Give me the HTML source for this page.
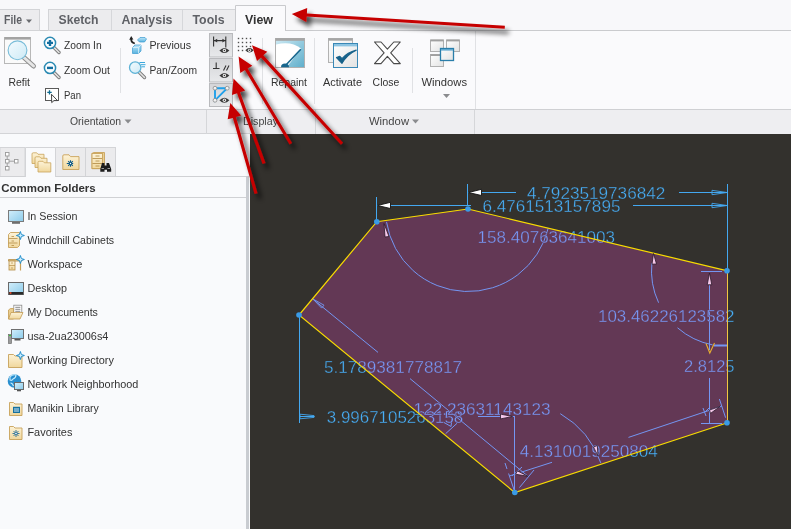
<!DOCTYPE html>
<html><head><meta charset="utf-8">
<style>
html,body{margin:0;padding:0;}
body{width:791px;height:529px;position:relative;overflow:hidden;background:#f8f8fa;font-family:"Liberation Sans",sans-serif;}
.abs{position:absolute;}
svg{position:absolute;left:0;top:0;will-change:transform;}
</style></head>
<body>
<!-- top strip -->
<div class="abs" style="left:0;top:0;width:791px;height:30px;background:#f8f8fa"></div>
<!-- ribbon -->
<div class="abs" style="left:0;top:30px;width:791px;height:79px;background:#fafafc;border-top:1px solid #cacbce;box-sizing:border-box"></div>
<!-- group label bar -->
<div class="abs" style="left:0;top:109px;width:791px;height:25px;background:#eeeef1;border-top:1px solid #cfd0d3;box-sizing:border-box"></div>
<!-- left panel -->
<div class="abs" style="left:0;top:134px;width:250px;height:395px;background:#f9fafc"></div>
<div class="abs" style="left:246px;top:176px;width:3px;height:353px;background:#c9ccd1"></div>
<!-- graphics -->
<div class="abs" style="left:250px;top:134px;width:541px;height:395px;background:#33312d"></div>

<svg width="791" height="529" viewBox="0 0 791 529" font-family="Liberation Sans, sans-serif">



<!-- graphics area -->
<defs>
<clipPath id="cpIn"><polygon points="376.8,221.7 468.0,209.0 727.5,270.8 727.5,422.7 514.8,492.5 299.0,315.0"/></clipPath>
<clipPath id="cpArea"><rect x="250" y="134" width="541" height="395"/></clipPath>

<g id="dimlines" fill="none" stroke="currentColor" stroke-width="1">
<!-- top horizontal dims -->
<path d="M376.5 197v24M467.5 184v21M727.5 184v87"/>
<path d="M377 205.5h94M633 205.5h94.5"/>
<path d="M468 192.5h48M679 192.5h48"/>
<path d="M712 190.3l15 2.2-15 2.2zM712 203.3l15 2.2-15 2.2z" stroke-width="0.9"/>
<!-- 158 arc at B -->
<path d="M386.5 221.9A82.5 82.5 0 0 0 548.2 228.3"/>
<!-- 103 arc at C -->
<path d="M651.9 262.9A75.5 75.5 0 0 0 658.6 302.7"/>
<path d="M677.5 327.8A75.5 75.5 0 0 0 712.6 344.9"/>
<!-- 2.8125 vertical -->
<path d="M701 271.5h21M709.5 285v65M709.5 378v45M701 423.5h21"/>
<path d="M714 345.5h13" stroke-width="2"/>
<!-- F witness + 3.99 -->
<path d="M299.5 315v108M299.5 416.5h15M478 416.5h36M514.5 416v76"/>
<path d="M300 414.2l14 1.4v1.8l-14 1.4z" stroke-width="0.9"/>
<!-- 5.17 aligned -->
<path d="M312.5 298.8L378 352.4M410 378.6L528 476.3M519.5 487.5L534 470"/>
<path d="M313 299l11 6.2-2.4 2.9z" stroke-width="0.9"/>
<!-- 122 arc at E -->
<path d="M560.3 413.7A91 91 0 0 1 600.8 462.9"/>
<path d="M445.6 433.7L457 423.3M451 426.5l-7 -4M451 426.5l1 -8"/>
<!-- 4.131 aligned -->
<path d="M509.3 476L552 462.3M628.5 437.4L721.8 406.2M508.6 473.5L514.8 492M719.4 399L725.6 417.7"/>
<path d="M507 469l-2 -6M512 476l10 -9"/>
<path d="M705 412l4 -4M706 416l-3 -8"/>
</g>
<g id="dimtext" font-size="16.2" stroke-width="0.3">
<text x="527" y="198.7" textLength="138.3" lengthAdjust="spacingAndGlyphs">4.7923519736842</text>
<text x="482.6" y="212.3" textLength="137.8" lengthAdjust="spacingAndGlyphs">6.4761513157895</text>
<text x="477.5" y="242.7" textLength="137.5" lengthAdjust="spacingAndGlyphs">158.40763641003</text>
<text x="598" y="321.9" textLength="136.5" lengthAdjust="spacingAndGlyphs">103.46226123582</text>
<text x="684" y="372.2" textLength="50.5" lengthAdjust="spacingAndGlyphs">2.8125</text>
<text x="324" y="372.8" textLength="138" lengthAdjust="spacingAndGlyphs">5.1789381778817</text>
<text x="326.8" y="423.3" textLength="136.5" lengthAdjust="spacingAndGlyphs">3.9967105263158</text>
<text x="413.6" y="414.8" textLength="137" lengthAdjust="spacingAndGlyphs">122.23631143123</text>
<text x="519.8" y="456.9" textLength="138" lengthAdjust="spacingAndGlyphs">4.1310019250804</text>
</g>

<filter id="shd" x="-30%" y="-30%" width="160%" height="160%"><feGaussianBlur in="SourceAlpha" stdDeviation="2.8"/><feOffset dx="3.5" dy="4.5" result="b"/><feComponentTransfer><feFuncA type="linear" slope="0.75"/></feComponentTransfer><feMerge><feMergeNode/><feMergeNode in="SourceGraphic"/></feMerge></filter>
</defs>
<g clip-path="url(#cpArea)">
<polygon points="376.8,221.7 468.0,209.0 727.5,270.8 727.5,422.7 514.8,492.5 299.0,315.0" fill="#633855"/>
<use href="#dimlines" color="#44a8f0"/>
<use href="#dimtext" fill="#48aef6" stroke="#33312d"/>
<g clip-path="url(#cpIn)">
<polygon points="376.8,221.7 468.0,209.0 727.5,270.8 727.5,422.7 514.8,492.5 299.0,315.0" fill="#633855"/>
<use href="#dimlines" color="#7496f2"/>
<use href="#dimtext" fill="#7898f6" stroke="#633855"/>
</g>
<polyline points="727.5,270.8 468.0,209.0 376.8,221.7 299.0,315.0 514.8,492.5 727.5,422.7" fill="none" stroke="#f8dc00" stroke-width="1.2"/>
<line x1="727.5" y1="271" x2="727.5" y2="422.7" stroke="#f2c640" stroke-width="1"/>
<!-- yellow V -->
<path d="M706 343.5l3.8 9.5 4.7-10" fill="none" stroke="#e8b030" stroke-width="1.1"/>
<!-- white arrowheads (black outline) -->
<path d="M377.5 205.5l13 -3.2v6.2z" fill="#fff" stroke="#111" stroke-width="0.9"/>
<path d="M468.5 192.5l13 -3.2v6.2z" fill="#fff" stroke="#111" stroke-width="0.9"/>
<!-- pink arrowheads -->
<g fill="#f5c8ea" stroke="#2a1828" stroke-width="0.8">
<path d="M384 223.5l5 13l-4 0.5z"/>
<path d="M653.5 253.5l3 10.5l-4.5 0.2z"/>
<path d="M709.5 273l2.3 11.8h-4.6z"/>
<path d="M512.5 416.5l-12 -2.4v4.8z"/>
<path d="M528 476.3l-10.5 -5.4l-2 3.3z"/>
<path d="M598 456l-4.5 -9l3.8 -1.5z"/>
<path d="M720 406.5l-10.5 3.5l1 3.4z"/>
</g>
<g fill="#3a9be6">
<circle cx="376.8" cy="221.7" r="2.8"/><circle cx="468" cy="209" r="2.8"/><circle cx="727" cy="270.8" r="2.8"/><circle cx="727" cy="422.7" r="2.8"/><circle cx="514.8" cy="492.5" r="2.8"/><circle cx="299" cy="315" r="2.8"/>
</g>
</g>


<!-- ribbon texts -->
<g font-size="11" fill="#333">
<text x="8.5" y="85.7" textLength="21.5" lengthAdjust="spacingAndGlyphs">Refit</text>
<text x="64" y="48.9" textLength="37.7" lengthAdjust="spacingAndGlyphs">Zoom In</text>
<text x="64" y="73.7" textLength="46" lengthAdjust="spacingAndGlyphs">Zoom Out</text>
<text x="64" y="98.5" textLength="17" lengthAdjust="spacingAndGlyphs">Pan</text>
<text x="149.5" y="49" textLength="41.5" lengthAdjust="spacingAndGlyphs">Previous</text>
<text x="149.5" y="74.2" textLength="47.5" lengthAdjust="spacingAndGlyphs">Pan/Zoom</text>
<text x="271" y="85.7" textLength="36" lengthAdjust="spacingAndGlyphs">Repaint</text>
<text x="323" y="86" textLength="39" lengthAdjust="spacingAndGlyphs">Activate</text>
<text x="372.6" y="86" textLength="26.7" lengthAdjust="spacingAndGlyphs">Close</text>
<text x="421.5" y="86" textLength="45.5" lengthAdjust="spacingAndGlyphs">Windows</text>
<text x="70" y="125" fill="#444" textLength="51" lengthAdjust="spacingAndGlyphs">Orientation</text>
<text x="243" y="125" fill="#444" textLength="35" lengthAdjust="spacingAndGlyphs">Display</text>
<text x="369" y="125" fill="#444" textLength="40" lengthAdjust="spacingAndGlyphs">Window</text>
</g>
<path d="M124.5 119.5h7l-3.5 4z" fill="#8a8b8e"/>
<path d="M412 119.5h7l-3.5 4z" fill="#8a8b8e"/>
<path d="M443 94h7l-3.5 4z" fill="#8a8b8e"/>
<!-- separators -->
<g stroke="#e0e1e4">
<line x1="120.5" y1="48" x2="120.5" y2="93"/>
<line x1="262.5" y1="38" x2="262.5" y2="104"/>
<line x1="314.5" y1="38" x2="314.5" y2="104"/>
<line x1="412.5" y1="48" x2="412.5" y2="93"/>
<line x1="475.5" y1="31" x2="475.5" y2="109"/>
</g>
<line x1="0" y1="133.5" x2="250" y2="133.5" stroke="#d3d4d7"/>
<g stroke="#d5d6d9">
<line x1="206.5" y1="110" x2="206.5" y2="134"/>
<line x1="315.5" y1="110" x2="315.5" y2="134"/>
<line x1="474.5" y1="110" x2="474.5" y2="134"/>
</g>


<!-- ribbon icons -->
<defs>
<linearGradient id="gLens" x1="0" y1="0" x2="1" y2="1"><stop offset="0" stop-color="#f4fbfe"/><stop offset="1" stop-color="#cdeaf6"/></linearGradient>
<linearGradient id="gRep" x1="0" y1="0" x2="1" y2="1"><stop offset="0" stop-color="#cfeaf4"/><stop offset="1" stop-color="#5eaecb"/></linearGradient>
<linearGradient id="gBtn" x1="0" y1="0" x2="0" y2="1"><stop offset="0" stop-color="#d4d5d8"/><stop offset="1" stop-color="#e8e9eb"/></linearGradient>
<linearGradient id="gWin" x1="0" y1="0" x2="1" y2="1"><stop offset="0" stop-color="#ffffff"/><stop offset="1" stop-color="#e2e2e2"/></linearGradient>
<linearGradient id="gCube" x1="0" y1="0" x2="0" y2="1"><stop offset="0" stop-color="#bfe6f8"/><stop offset="1" stop-color="#5ab4e0"/></linearGradient>
<linearGradient id="gFold" x1="0" y1="0" x2="0" y2="1"><stop offset="0" stop-color="#fdf3d8"/><stop offset="1" stop-color="#f0d79c"/></linearGradient>
<linearGradient id="gScr" x1="0" y1="0" x2="1" y2="1"><stop offset="0" stop-color="#d2eefb"/><stop offset="1" stop-color="#8ccbea"/></linearGradient>
</defs>
<!-- Refit -->
<rect x="4.5" y="37.5" width="26" height="26" fill="#fafafa" stroke="#b8b8b8"/>
<rect x="4.5" y="37" width="26" height="2.6" fill="#a3a3a3"/>
<line x1="24" y1="57.5" x2="33.5" y2="66" stroke="#8e8e8e" stroke-width="5" stroke-linecap="round"/>
<line x1="24" y1="57.5" x2="33.5" y2="66" stroke="#e6e6e6" stroke-width="3" stroke-linecap="round"/>
<circle cx="17.5" cy="50.3" r="9.4" fill="url(#gLens)" stroke="#78bcd8" stroke-width="1.1"/>
<!-- Zoom In -->
<line x1="54" y1="47.5" x2="59" y2="52.5" stroke="#7a7a7a" stroke-width="3.4" stroke-linecap="round"/>
<line x1="54" y1="47.5" x2="59" y2="52.5" stroke="#e4e4e4" stroke-width="1.6" stroke-linecap="round"/>
<circle cx="50" cy="42.9" r="5.6" fill="#fafdff" stroke="#2b8ab3" stroke-width="1.5"/>
<path d="M47 42.9h6M50 39.9v6" stroke="#136ea0" stroke-width="2.4"/>
<!-- Zoom Out -->
<line x1="54" y1="72.5" x2="59" y2="77.5" stroke="#7a7a7a" stroke-width="3.4" stroke-linecap="round"/>
<line x1="54" y1="72.5" x2="59" y2="77.5" stroke="#e4e4e4" stroke-width="1.6" stroke-linecap="round"/>
<circle cx="50" cy="67.9" r="5.6" fill="#fafdff" stroke="#2b8ab3" stroke-width="1.5"/>
<path d="M47 67.9h6" stroke="#136ea0" stroke-width="2.4"/>
<!-- Pan -->
<rect x="45.5" y="88.5" width="13" height="12" fill="#fff" stroke="#5a5a5a"/>
<path d="M47.3 92.4h4.4M49.5 90.2v4.4" stroke="#0e6a90" stroke-width="1.3"/>
<path d="M51.5 94.3L57.5 100.6L54 100.6L51.7 102.6Z" fill="#fff" stroke="#333" stroke-width="0.9" stroke-linejoin="round"/>
<!-- Previous -->
<path d="M134.8 43.5 Q131 42.5 131.2 39" fill="none" stroke="#222" stroke-width="1.7"/>
<path d="M129.2 39.8l2-3.8 2.2 3.6z" fill="#222"/>
<path d="M137.5 40 l2.5 -2.5 h5 l1.5 1.5 -2 3 h-5z" fill="url(#gCube)" stroke="#3a9ad0" stroke-width="0.7"/>
<path d="M132.5 47.5 l2.5 -2.5 h6 v6 l-2.5 2.5 h-6z" fill="url(#gCube)" stroke="#3a9ad0" stroke-width="0.7"/>
<path d="M132.5 47.5h6l2.5-2.5M138.5 47.5v6" fill="none" stroke="#e8f6fd" stroke-width="0.7"/>
<!-- Pan/Zoom -->
<line x1="139.5" y1="72.5" x2="144.5" y2="77.5" stroke="#7a7a7a" stroke-width="3.4" stroke-linecap="round"/>
<line x1="139.5" y1="72.5" x2="144.5" y2="77.5" stroke="#e4e4e4" stroke-width="1.6" stroke-linecap="round"/>
<circle cx="135.2" cy="67.6" r="5.7" fill="url(#gLens)" stroke="#5db2d6" stroke-width="1.3"/>
<path d="M139.5 62.5h5.5M141 64.7h4.5M141.5 66.8h3.5" stroke="#3ba8dc" stroke-width="1"/>
<!-- Display buttons -->
<g stroke="#b9babd" fill="url(#gBtn)">
<rect x="209.5" y="33.5" width="23" height="23.5"/>
<rect x="209.5" y="58.5" width="23" height="23.5"/>
<rect x="209.5" y="83.5" width="23" height="23"/>
</g>
<g fill="none" stroke="#333" stroke-width="1.1">
<path d="M213.6 36.5v10M225.8 36.5v11M214 40.6h11.4"/>
<path d="M213 68.5h6.5M216.2 62.5v6"/>
<path d="M223.5 70.5l2.5-5M226.5 70.5l2.5-5"/>
</g>
<path d="M214.2 40.6l3 -1.8v3.6zM225.4 40.6l-3 -1.8v3.6z" fill="#333"/>
<path d="M219.4 50.5 q5 -5 10 0 q-5 5 -10 0z" fill="#3a3a3a"/><circle cx="224.4" cy="50.5" r="1.7" fill="#f4f4f4"/><circle cx="224.4" cy="50.5" r="0.8" fill="#333"/><path d="M219.4 75.5 q5 -5 10 0 q-5 5 -10 0z" fill="#3a3a3a"/><circle cx="224.4" cy="75.5" r="1.7" fill="#f4f4f4"/><circle cx="224.4" cy="75.5" r="0.8" fill="#333"/><path d="M219.4 100.3 q5 -5 10 0 q-5 5 -10 0z" fill="#3a3a3a"/><circle cx="224.4" cy="100.3" r="1.7" fill="#f4f4f4"/><circle cx="224.4" cy="100.3" r="0.8" fill="#333"/><path d="M245.3 50.3 q4.2 -4.6 8.4 0 q-4.2 4.6 -8.4 0z" fill="#3a3a3a"/><circle cx="249.5" cy="50.3" r="1.6" fill="#f4f4f4"/><circle cx="249.5" cy="50.3" r="0.8" fill="#333"/>
<path d="M215 88.2h12.2L215 100.3z" fill="none" stroke="#1fa0ea" stroke-width="1.9"/>
<g fill="#f2f2f2" stroke="#8a8a8a" stroke-width="0.8"><circle cx="215" cy="88.2" r="1.9"/><circle cx="227.2" cy="88.2" r="1.9"/><circle cx="215" cy="100.3" r="1.9"/></g>
<g fill="#505050"><rect x="237.8" y="37.8" width="1.4" height="1.4"/><rect x="241.8" y="37.8" width="1.4" height="1.4"/><rect x="245.8" y="37.8" width="1.4" height="1.4"/><rect x="249.8" y="37.8" width="1.4" height="1.4"/><rect x="237.8" y="41.8" width="1.4" height="1.4"/><rect x="241.8" y="41.8" width="1.4" height="1.4"/><rect x="245.8" y="41.8" width="1.4" height="1.4"/><rect x="249.8" y="41.8" width="1.4" height="1.4"/><rect x="237.8" y="45.8" width="1.4" height="1.4"/><rect x="241.8" y="45.8" width="1.4" height="1.4"/><rect x="245.8" y="45.8" width="1.4" height="1.4"/><rect x="249.8" y="45.8" width="1.4" height="1.4"/><rect x="237.8" y="49.8" width="1.4" height="1.4"/><rect x="241.8" y="49.8" width="1.4" height="1.4"/></g>
<!-- Repaint -->
<rect x="275.5" y="38.5" width="29" height="29" fill="url(#gRep)" stroke="#b0b0b0"/>
<rect x="275.5" y="38.2" width="29" height="2.6" fill="#a5a5a5"/>
<path d="M276 67 V44.5 Q291 40.5 301 48.5 L287 67Z" fill="#fff"/>
<line x1="285" y1="66" x2="300.8" y2="49.2" stroke="#17668d" stroke-width="1.6"/>
<path d="M281 67.2 a4 3.6 0 0 1 8 0z" fill="#17668d"/>
<!-- Activate -->
<rect x="328.5" y="38.5" width="24" height="24" fill="url(#gWin)" stroke="#b2b2b2"/>
<rect x="328.5" y="38.3" width="24" height="2.4" fill="#a5a5a5"/>
<rect x="333.5" y="43.5" width="24" height="24" fill="url(#gWin)" stroke="#3a88b6"/>
<rect x="334" y="44" width="23" height="2.4" fill="#8cc4e2"/>
<path d="M336.5 57.5 L342 63.3 Q347 54.5 356.2 50.2 Q347.5 52.5 342 58.7 L339.8 56.3Z" fill="#17628a" stroke="#17628a" stroke-width="1.2" stroke-linejoin="round"/>
<!-- Close -->
<path d="M374.5 42h6.5l6.4 7.2 6.4-7.2h6.5l-9.6 10.8 9.6 10.8h-6.5l-6.4-7.2-6.4 7.2h-6.5l9.6-10.8z" fill="#fff" stroke="#4a4a4a" stroke-width="1.1" stroke-linejoin="round"/>
<!-- Windows -->
<g fill="url(#gWin)" stroke="#b0b0b0">
<rect x="430.5" y="40" width="13" height="11.5"/>
<rect x="446.5" y="40" width="13" height="11.5"/>
<rect x="430.5" y="54.5" width="13" height="12"/>
</g>
<g fill="#a0a0a0"><rect x="430.5" y="39.6" width="13" height="1.8"/><rect x="446.5" y="39.6" width="13" height="1.8"/><rect x="430.5" y="54.2" width="13" height="1.8"/></g>
<rect x="440.5" y="48.5" width="13" height="12" fill="url(#gWin)" stroke="#2a7eaa" stroke-width="1.3"/>
<rect x="441" y="49" width="12" height="1.6" fill="#5fa8cf"/>


<!-- left panel -->
<g>
<rect x="0" y="147.5" width="25" height="29" fill="#ebebed" stroke="#d3d4d7"/>
<rect x="55.5" y="147.5" width="30" height="29" fill="#ebebed" stroke="#d3d4d7"/>
<rect x="85.5" y="147.5" width="30" height="29" fill="#ebebed" stroke="#d3d4d7"/>
<line x1="0" y1="176.5" x2="246" y2="176.5" stroke="#d0d1d4"/>
<path d="M25.5 177V147.5h30V177" fill="#f9fafc" stroke="#d3d4d7"/>
<rect x="26" y="176" width="29" height="2" fill="#f9fafc"/>
<line x1="0" y1="197.5" x2="246" y2="197.5" stroke="#d0d1d4"/>
<!-- tab icons -->
<g fill="#fff" stroke="#9a9a9a" stroke-width="0.9">
<rect x="5.5" y="152.5" width="3.5" height="3.5"/><rect x="5.5" y="159.5" width="3.5" height="3.5"/><rect x="14.5" y="159.5" width="3.5" height="3.5"/><rect x="5.5" y="166.5" width="3.5" height="3.5"/>
<path d="M7.2 156v3.5M7.2 163v3.5M9 161.2h5.5" fill="none"/>
</g>
<g stroke="#c9a35a" stroke-width="0.8" fill="url(#gFold)">
<path d="M32 163.5v-9.5q0-1.2 1.2-1.2h3.5l1.3 1.5h6v9.2z"/>
<path d="M35 167.5v-9.5q0-1.2 1.2-1.2h3.5l1.3 1.5h6v9.2z"/>
<path d="M38 172v-9.5q0-1.2 1.2-1.2h3.8l1.3 1.5h6.5v9.2z"/>
</g>
<path d="M62.8 169.5V156q0-1.2 1.2-1.2h5l1.5 1.8h8.5v12.9z" fill="url(#gFold)" stroke="#c9a35a" stroke-width="0.9"/>
<path d="M66.8 163.5h6.4M70.5 160.2v6.6M68.2 161.2l4.6 4.6M72.8 161.2l-4.6 4.6" stroke="#0c5a88" stroke-width="1.1"/><circle cx="70.5" cy="163.5" r="1.5" fill="#0c5a88"/><circle cx="70.5" cy="163.5" r="0.7" fill="#fff"/>
<path d="M92 153.5l1.5-1h11v15l-1.5 1.2h-11z" fill="#e9cf95" stroke="#c9a35a" stroke-width="0.9"/><rect x="92" y="153.5" width="10.5" height="15" fill="url(#gFold)" stroke="#c9a35a" stroke-width="0.9"/>
<path d="M92.5 158.5h9.5M92.5 163.5h9.5M95.5 156h4M95.5 161h4M95.5 166h4" stroke="#b08840" stroke-width="0.8"/>
<path d="M102 163h2.5v2.5h2v-2.5h2.5l2.2 6v2.8h-4.2v-2h-2.5v2h-4.2v-2.8z" fill="#1c1c1c"/><path d="M101.5 168.5h2.5M107.5 168.5h2.5" stroke="#9a9a9a" stroke-width="1"/>
</g>
<text x="1.2" y="191.6" font-size="11" font-weight="bold" fill="#333" textLength="94.5" lengthAdjust="spacingAndGlyphs">Common Folders</text>
<g font-size="11" fill="#333">
<text x="27.4" y="219.8" textLength="50" lengthAdjust="spacingAndGlyphs">In Session</text>
<text x="27.4" y="243.8" textLength="86.7" lengthAdjust="spacingAndGlyphs">Windchill Cabinets</text>
<text x="27.4" y="267.8" textLength="55" lengthAdjust="spacingAndGlyphs">Workspace</text>
<text x="27.4" y="291.8" textLength="39.5" lengthAdjust="spacingAndGlyphs">Desktop</text>
<text x="27.4" y="315.8" textLength="70.5" lengthAdjust="spacingAndGlyphs">My Documents</text>
<text x="27.4" y="339.8" textLength="81" lengthAdjust="spacingAndGlyphs">usa-2ua23006s4</text>
<text x="27.4" y="363.8" textLength="86.5" lengthAdjust="spacingAndGlyphs">Working Directory</text>
<text x="27.4" y="387.8" textLength="111" lengthAdjust="spacingAndGlyphs">Network Neighborhood</text>
<text x="27.4" y="411.8" textLength="71.5" lengthAdjust="spacingAndGlyphs">Manikin Library</text>
<text x="27.4" y="435.8" textLength="45" lengthAdjust="spacingAndGlyphs">Favorites</text>
</g>
<!-- list icons -->
<!-- In Session -->
<rect x="8.5" y="210.5" width="15" height="11" fill="url(#gScr)" stroke="#7b7b7b"/>
<rect x="12" y="222" width="8" height="1.8" fill="#6e6e6e"/>
<!-- Windchill Cabinets -->
<path d="M8.5 234.5l2-2h9v13l-2 2h-9z" fill="url(#gFold)" stroke="#c7a15a" stroke-width="0.9"/>
<path d="M8.5 238.5h9M8.5 243h9M11.5 236.5h2.5M11.5 241h2.5M11.5 245.5h2.5" stroke="#b48d48" stroke-width="0.8"/>
<path d="M20.4 231.5l1 3 3 1 -3 1 -1 3 -1 -3 -3 -1 3 -1z" fill="#cfeefe" stroke="#1788c8" stroke-width="0.9"/>
<!-- Workspace -->
<path d="M8.5 259.5h13.5v1.5h-13.5z" fill="#e8cf95" stroke="#b48d48" stroke-width="0.8"/>
<rect x="9" y="261" width="6" height="9" fill="url(#gFold)" stroke="#b48d48" stroke-width="0.8"/>
<path d="M9 265.5h6M11 263h2M11 268h2" stroke="#b48d48" stroke-width="0.7"/>
<path d="M20.5 261v9.5" stroke="#c7a15a" stroke-width="1.2"/>
<path d="M20.4 255.5l1 3 3 1 -3 1 -1 3 -1 -3 -3 -1 3 -1z" fill="#cfeefe" stroke="#1788c8" stroke-width="0.9"/>
<!-- Desktop -->
<rect x="8.5" y="282.5" width="15" height="12" fill="url(#gScr)" stroke="#6a6a6a"/>
<rect x="9" y="292" width="14" height="2.5" fill="#2a2a2a"/>
<circle cx="10.5" cy="293" r="1.1" fill="#e04a2a"/>
<!-- My Documents -->
<rect x="13.8" y="305.2" width="8" height="8.5" fill="#fff" stroke="#8a8a8a" stroke-width="0.8"/>
<path d="M15.3 307.3h5M15.3 309.3h5M15.3 311.3h5" stroke="#6a6a6a" stroke-width="0.8"/>
<path d="M8.5 310l2-1.5h3v10.5h-5z" fill="#e9cd8e" stroke="#c39a52" stroke-width="0.8"/>
<path d="M11 312.5h12l-3 6.5h-11.5z" fill="url(#gFold)" stroke="#c39a52" stroke-width="0.8"/>
<!-- usa -->
<rect x="11.5" y="329.5" width="12" height="9" fill="url(#gScr)" stroke="#6e6e6e"/>
<rect x="14.5" y="339" width="6" height="1.5" fill="#555"/>
<rect x="8.5" y="334.5" width="3" height="9" fill="#9a9a9a" stroke="#6e6e6e" stroke-width="0.7"/>
<rect x="9" y="335" width="2" height="1" fill="#3c3"/>
<!-- Working Directory -->
<path d="M8.5 354.5h5l1.5 1.5h7v11.5h-13.5z" fill="url(#gFold)" stroke="#c7a15a" stroke-width="0.9"/>
<path d="M20.4 351.5l1 3 3 1 -3 1 -1 3 -1 -3 -3 -1 3 -1z" fill="#cfeefe" stroke="#1788c8" stroke-width="0.9"/>
<!-- Network -->
<circle cx="14.5" cy="381" r="6.8" fill="#2a8fcf"/><path d="M10 377q2.5 -3 6 -2q0 3 -3 4q-1 2 -3 1zM10.5 383q2 0 3 3" stroke="#c6ecfc" stroke-width="1.1" fill="none"/>
<rect x="14.5" y="382.5" width="9" height="7" fill="url(#gScr)" stroke="#6a6a6a"/>
<rect x="17" y="390" width="4" height="1.3" fill="#555"/>
<!-- Manikin -->
<path d="M9.5 402.5h4l1.5 1.5h7v11.5h-12.5z" fill="url(#gFold)" stroke="#c7a15a" stroke-width="0.9"/>
<rect x="13" y="406.8" width="7" height="6.2" fill="#17719f"/>
<path d="M14 409h5M14 411h5" stroke="#e8f6ff" stroke-width="0.9"/>
<!-- Favorites -->
<path d="M9.5 426.5h4l1.5 1.5h7v11.5h-12.5z" fill="url(#gFold)" stroke="#c7a15a" stroke-width="0.9"/>
<path d="M12.5 433.5h7M16 430v7M13.5 431l5 5M18.5 431l-5 5" stroke="#0e5f8f" stroke-width="0.8"/><circle cx="16" cy="433.5" r="1.2" fill="#fff" stroke="#0e5f8f" stroke-width="0.7"/>

<!-- tabs -->
<g id="tabs">
<rect x="-1.5" y="9.5" width="41" height="21" fill="#ececee" stroke="#d3d4d7"/>
<text x="4" y="23.8" font-size="13" font-weight="bold" fill="#5f6166" textLength="18" lengthAdjust="spacingAndGlyphs">File</text>
<path d="M26 19.5h6l-3 3.5z" fill="#6a6c70"/>
<rect x="48.5" y="9.5" width="187" height="21" fill="#ececee" stroke="#d3d4d7"/>
<line x1="111.5" y1="10" x2="111.5" y2="30" stroke="#d6d7da"/>
<line x1="182.5" y1="10" x2="182.5" y2="30" stroke="#d6d7da"/>
<text x="58.5" y="23.8" font-size="13" font-weight="bold" fill="#5f6166" textLength="40" lengthAdjust="spacingAndGlyphs">Sketch</text>
<text x="121.5" y="23.8" font-size="13" font-weight="bold" fill="#5f6166" textLength="51" lengthAdjust="spacingAndGlyphs">Analysis</text>
<text x="192.5" y="23.8" font-size="13" font-weight="bold" fill="#5f6166" textLength="32" lengthAdjust="spacingAndGlyphs">Tools</text>
<path d="M235.5 31V5.5h50V31" fill="#fafafc" stroke="#c9cacd"/>
<text x="245" y="23.8" font-size="13" font-weight="bold" fill="#333" textLength="28" lengthAdjust="spacingAndGlyphs">View</text>
</g>
<!-- red arrows -->
<g filter="url(#shd)" fill="#c60606">
<path d="M504.9 25.8L306.9 13.5L307.2 8.0L291.8 14.1L306.3 22.0L306.7 16.6L504.7 28.8Z"/>
<path d="M343.1 142.8L263.3 55.3L267.3 51.7L252.0 45.3L257.0 61.1L261.0 57.4L340.9 144.8Z"/>
<path d="M292.1 143.0L247.6 68.5L252.3 65.7L238.6 56.4L240.3 72.9L245.0 70.1L289.5 144.6Z"/>
<path d="M265.5 163.1L240.0 92.2L245.2 90.4L233.5 78.6L232.0 95.1L237.1 93.2L262.5 164.1Z"/>
<path d="M257.5 193.3L235.9 117.0L241.1 115.5L230.3 103.0L227.7 119.3L232.9 117.9L254.5 194.1Z"/>
</g>
</svg>
</body></html>
